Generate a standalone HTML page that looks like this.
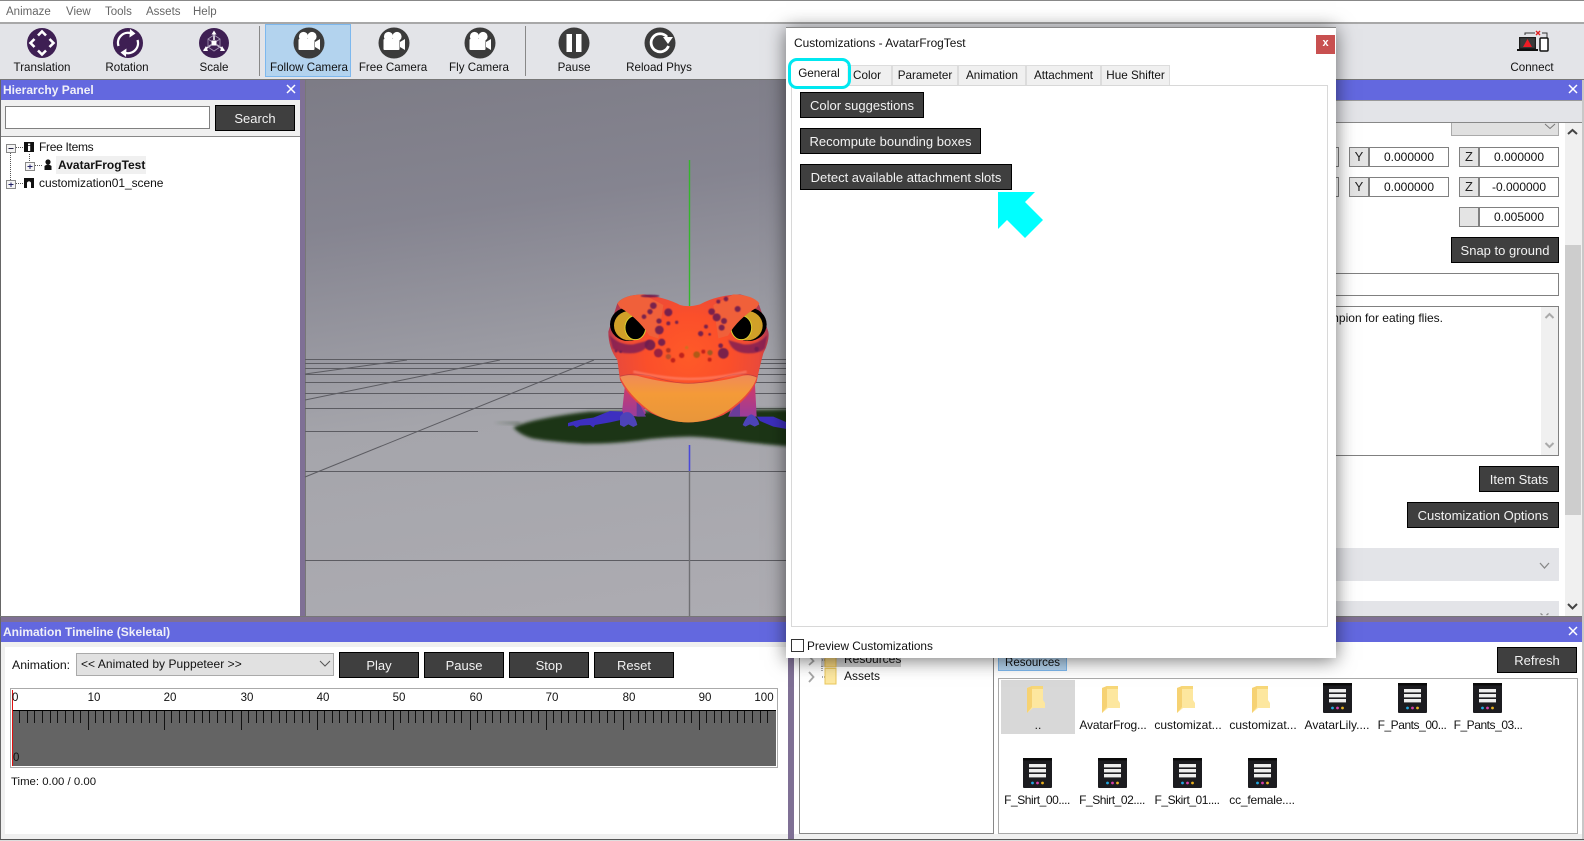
<!DOCTYPE html>
<html><head><meta charset="utf-8"><title>Animaze</title>
<style>
html,body{margin:0;padding:0;width:1584px;height:841px;overflow:hidden;background:#7f7095;font-family:"Liberation Sans",sans-serif;font-size:12px;color:#111}
div,span{box-sizing:border-box}
.a,.t,.b,.tl,.h{position:absolute}
.t{white-space:nowrap;line-height:14px}
.c{transform:translateX(-50%)}
.b{background:#3f3f3f;border:1px solid #000;color:#f2f2f2;font-size:13px;display:flex;align-items:center;justify-content:center;white-space:nowrap}
.tl{transform:translateX(-50%);top:37px;white-space:nowrap;line-height:14px;color:#111;font-size:11.6px}
.h{background:#6368df;height:20px;color:#f0f0f8;font-weight:bold;line-height:20px;padding-left:2px;font-size:12px}
.lab{position:absolute;width:20px;height:20px;background:#e4e4e4;border:1px solid #808080;text-align:center;line-height:18px;font-size:13px;color:#222}
.inp{position:absolute;height:20px;background:#fff;border:1px solid #808080;text-align:center;line-height:18px;color:#111}
.tab{position:absolute;top:65px;height:20px;background:#f0f0f0;border:1px solid #dcdcdc;border-bottom:0;text-align:center;line-height:20px;font-size:11.7px;color:#111}
.fn{position:absolute;transform:translateX(-50%);white-space:nowrap;line-height:14px;font-size:12px}
.fu{letter-spacing:-.45px}
svg{position:absolute;overflow:visible}
</style></head><body>

<!-- top chrome -->
<div class="a" style="left:0;top:0;width:1584px;height:1px;background:#888"></div>
<div class="a" style="left:0;top:1px;width:1584px;height:21px;background:#fff"></div>
<div class="a" style="left:0;top:22px;width:1584px;height:2px;background:#a8a8a8"></div>
<div class="t" style="left:6px;top:5px;color:#666;font-size:11.5px">Animaze</div>
<div class="t" style="left:66px;top:5px;color:#666;font-size:11.5px">View</div>
<div class="t" style="left:105px;top:5px;color:#666;font-size:11.5px">Tools</div>
<div class="t" style="left:146px;top:5px;color:#666;font-size:11.5px">Assets</div>
<div class="t" style="left:193px;top:5px;color:#666;font-size:11.5px">Help</div>

<!-- toolbar -->
<div class="a" style="left:0;top:24px;width:1584px;height:55px;background:#e3e4e8"></div>
<div class="a" style="left:0;top:79px;width:1584px;height:1px;background:#777"></div>
<div class="a" style="left:259px;top:26px;width:1px;height:50px;background:#888"></div>
<div class="a" style="left:525px;top:26px;width:1px;height:50px;background:#888"></div>
<div class="a" style="left:265px;top:24px;width:86px;height:53px;background:#b3d3ee;border:1px solid #7db8ee"></div>
<div id="tb" class="a" style="left:0;top:24px;width:1584px;height:55px">
<div class="tl" style="left:42px">Translation</div>
<div class="tl" style="left:127px">Rotation</div>
<div class="tl" style="left:214px">Scale</div>
<div class="tl" style="left:309px">Follow Camera</div>
<div class="tl" style="left:393px">Free Camera</div>
<div class="tl" style="left:479px">Fly Camera</div>
<div class="tl" style="left:574px">Pause</div>
<div class="tl" style="left:659px">Reload Phys</div>
<div class="tl" style="left:1532px">Connect</div>
</div>
<svg style="left:0;top:0" width="1584" height="80" viewBox="0 0 1584 80">
<defs>
<g id="cam"><circle r="15.5" fill="#3b3b3b"/><circle cx="-5.500" cy="-6.500" r="4.600" fill="#fff"/><circle cx="3" cy="-6.500" r="4.600" fill="#fff"/><rect x="-10.500" y="-4" width="16" height="11" rx="1" fill="#fff"/><path d="M6-1 L11-4 V7 L6 4Z" fill="#fff"/></g>
<g id="fold"><path d="M0 2 L5 0 H16 V14 L18 17 V22 H6 L0 27Z" fill="#fde79f"/><path d="M0 2 L5 0 V21 L0 27Z" fill="#f6d273"/><path d="M5 0 H16 V3 H5Z" fill="#f7d778"/></g>
<g id="doc"><rect width="29" height="30" rx="1" fill="#1c1c20"/><rect width="29" height="2.500" fill="#0a0a0a"/><rect x="6" y="6" width="17" height="3.400" fill="#eee"/><rect x="6" y="11" width="17" height="3.400" fill="#eee"/><rect x="6" y="16" width="17" height="3.400" fill="#eee"/><circle cx="9.500" cy="25" r="1.400" fill="#22a7e0"/><circle cx="14.500" cy="25" r="1.400" fill="#d43fa8"/><circle cx="19.500" cy="25" r="1.400" fill="#e8b020"/></g>
<g id="dec"><path d="M.5 0V19M7.500 0V12M15.500 0V12M22.500 0V12M30.500 0V12M38.500 0V12M45.500 0V12M53.500 0V12M61.500 0V12M68.500 0V12" stroke="#111" stroke-width="1" shape-rendering="crispEdges" fill="none"/></g>
</defs>
<g transform="translate(42,43)"><circle r="15" fill="#3e1f53"/><path d="M-4-7.500 L0-11.500 L4-7.500M-4 7.500 L0 11.500 L4 7.500M-7.500-4 L-11.500 0 L-7.500 4M7.500-4 L11.500 0 L7.500 4" fill="none" stroke="#fff" stroke-width="2.600"/></g>
<g transform="translate(128,43)"><circle r="15" fill="#3e1f53"/><path d="M-9.500 3 A10 10 0 0 1 3-9.700" fill="none" stroke="#fff" stroke-width="2.300"/><path d="M9.500-3 A10 10 0 0 1 -3 9.700" fill="none" stroke="#fff" stroke-width="2.300"/><path d="M2-14 L7.500-9.500 L1.500-5.500Z M-2 14 L-7.500 9.500 L-1.500 5.500Z" fill="#fff"/></g>
<g transform="translate(214,43)"><circle r="15" fill="#3e1f53"/><path d="M0-11 V-3M-10 7 L-3 2M10 7 L3 2" stroke="#fff" stroke-width="1.500"/><path d="M-2.500-8.500 L0-12.500 L2.500-8.500Z" fill="#fff"/><path d="M-6-4 L0-8 L6-4 V4 L0 8 L-6 4Z M-6-4 L6 4M6-4 L-6 4" fill="none" stroke="#a89ab8" stroke-width=".8"/><rect x="-2.500" y="-2.500" width="5" height="5" fill="#fff"/><path d="M-11 8 L-8 3 L-6 8Z M11 8 L8 3 L6 8Z" fill="#fff"/></g>
<use href="#cam" x="309" y="43"/>
<use href="#cam" x="394" y="43"/>
<use href="#cam" x="480" y="43"/>
<g transform="translate(574,43)"><circle r="15.500" fill="#3b3b3b"/><rect x="-7.500" y="-9" width="5.500" height="18" fill="#fff"/><rect x="2" y="-9" width="5.500" height="18" fill="#fff"/></g>
<g transform="translate(660,43)"><circle r="15.500" fill="#3b3b3b"/><path d="M7-6 A9 9 0 1 0 8.500 3" fill="none" stroke="#fff" stroke-width="2.800"/><path d="M3-6 H13 L8 1Z" fill="#fff"/></g>
<g transform="translate(1518,32)"><path d="M7 3 V1 H17M24 1 H29 V6" fill="none" stroke="#333" stroke-width="1"/><path d="M18-1 L22 3M22-1 L18 3" stroke="#e02020" stroke-width="1.400"/><rect x="1" y="5" width="17" height="12" fill="#1c1c1c"/><rect x="2.200" y="6.200" width="14.600" height="9.600" fill="#3a3a3a"/><path d="M9.500 7 L14 15 H5Z" fill="#ee1c25"/><rect x="-1" y="17" width="21" height="2" fill="#111"/><rect x="22" y="6" width="8" height="13" rx="1" fill="#fff" stroke="#111" stroke-width="1.500"/></g>
</svg>

<!-- hierarchy panel -->
<div class="a" style="left:0;top:80px;width:1px;height:760px;background:#666"></div>
<div class="h" style="left:1px;top:80px;width:299px">Hierarchy Panel<svg style="left:285px;top:4px" width="10" height="10" viewBox="0 0 10 10"><path d="M1 1L9 9M9 1L1 9" stroke="#fff" stroke-width="1.500"/></svg></div>
<div class="a" style="left:1px;top:100px;width:299px;height:36px;background:#f0f0f0"></div>
<div class="a" style="left:5px;top:106px;width:205px;height:23px;background:#fff;border:1px solid #808080"></div>
<div class="b" style="left:215px;top:105px;width:80px;height:26px">Search</div>
<div class="a" style="left:1px;top:136px;width:299px;height:480px;background:#fff;border-top:1px solid #888"></div>
<div class="a" style="left:56px;top:156px;width:90px;height:18px;background:#f0f0f0"></div>
<div class="t" style="left:39px;top:140px;letter-spacing:-.3px">Free Items</div>
<div class="t" style="left:58px;top:158px;font-weight:bold">AvatarFrogTest</div>
<div class="t" style="left:39px;top:176px;letter-spacing:-.05px">customization01_scene</div>
<svg style="left:0;top:136px" width="60" height="60" viewBox="0 136 60 60">
<path d="M10.500 153 V180M16 147.500 H24M29.500 154 V162M35 165.500 H43M16 183.500 H24" stroke="#555" stroke-width="1" stroke-dasharray="1 1" fill="none"/>
<rect x="6.500" y="144.500" width="9" height="8" fill="#f4f4f4" stroke="#888"/><path d="M8.500 148.500 H13.500" stroke="#224"/>
<rect x="25.500" y="162.500" width="9" height="8" fill="#f4f4f4" stroke="#888"/><path d="M27.500 166.500 H32.500M30 164.500 V169" stroke="#226"/>
<rect x="6.500" y="180.500" width="9" height="8" fill="#f4f4f4" stroke="#888"/><path d="M8.500 184.500 H13.500M11 182.500 V187" stroke="#226"/>
<rect x="24" y="142" width="10" height="10" fill="#111"/><rect x="28" y="143.500" width="2.200" height="1.800" fill="#fff"/><rect x="28" y="146" width="2.200" height="5" fill="#fff"/>
<circle cx="48" cy="162" r="2.600" fill="#111"/><path d="M44.500 170 V166 Q48 163 51.500 166 V170Z" fill="#111"/>
<rect x="24" y="178" width="10" height="10" fill="#111"/><path d="M27 188 V182.500 Q29 180 31 182.500 V188Z" fill="#fff"/>
</svg>

<!-- viewport -->
<div class="a" style="left:305px;top:80px;width:490px;height:536px;background:linear-gradient(172deg,#7d7c86 0%,#858490 25%,#9a9aa2 48%,#a5a5ab 60%,#adacb2 100%);border-left:1px solid #777"></div>
<svg style="left:305px;top:80px" width="481" height="536" viewBox="305 80 481 536">
<defs>
<clipPath id="vc"><rect x="305" y="80" width="481" height="536"/></clipPath>
<radialGradient id="hg" gradientUnits="userSpaceOnUse" cx="265" cy="215" r="250"><stop offset="0" stop-color="#ff5a28"/><stop offset=".5" stop-color="#fb4f2a"/><stop offset=".85" stop-color="#ea4a3a"/><stop offset="1" stop-color="#b03a50"/></radialGradient>
<linearGradient id="ch" x1="0" y1="0" x2="0" y2="1"><stop offset="0" stop-color="#f08a58"/><stop offset=".4" stop-color="#f49a38"/><stop offset="1" stop-color="#e8963a"/></linearGradient>
<linearGradient id="lg" x1="0" y1="0" x2="0" y2="1"><stop offset="0" stop-color="#d03a68"/><stop offset="1" stop-color="#9a3d9a"/></linearGradient>
<filter id="bl" x="-20%" y="-20%" width="140%" height="140%"><feGaussianBlur stdDeviation="2.500"/></filter>
<filter id="bl2" x="-10%" y="-20%" width="120%" height="140%"><feGaussianBlur stdDeviation="5"/></filter>
<filter id="bl3"><feGaussianBlur stdDeviation="1.500"/></filter>
</defs>
<g stroke="#5c5c62" stroke-width="1" fill="none">
<path d="M305 359.500H786M305 363.500H786M305 368.500H786M305 374.500H786M305 382.500H786M305 393.500H786M305 408.500H786M305 431.500H478M305 471.500H786M305 560.500H786"/>
<path d="M407 360 L305 374M500 360 L305 400M594 360 L305 477"/>
</g>
<path d="M689.500 471V616" stroke="#707074" stroke-width="1.400"/>
<path d="M689.500 160V306" stroke="#35b52d" stroke-width="1.400"/>
<path d="M689.500 445V471" stroke="#4a4ad8" stroke-width="1.600"/>
<g clip-path="url(#vc)">
<!-- leaf -->
<g transform="translate(300,340) scale(.33333)">
<path d="M640 262 Q680 245 720 238 Q800 222 870 215 L1480 208 V320 Q1380 312 1300 302 Q1230 292 1170 290 Q1100 292 1050 297 Q950 312 850 311 Q760 306 700 296 Q660 285 640 262Z" fill="#1a3615" filter="url(#bl2)"/>
<path d="M580 248 L660 245 L660 255Z" fill="#1a3615" opacity=".35" filter="url(#bl2)"/>
</g>
<g transform="translate(600,285) scale(.33333)">
<!-- legs -->
<path d="M75 300 L65 390 L118 395 L138 385 L110 310Z" fill="url(#lg)"/>
<path d="M465 300 L470 395 L420 395 L385 395 L420 310Z" fill="url(#lg)"/>
<path d="M110 340 L138 395 L110 395Z M420 340 L385 395 L420 395Z" fill="#6a3c98"/>
<!-- feet -->
<path d="M-96 414 Q-60 402 -20 398 L30 378 L70 380 L62 405 L30 412 L-15 420 L-20 427 L-30 420 L-60 422 L-70 428 L-80 421 L-96 424Z" fill="#3d2fc0"/>
<path d="M60 395 Q70 378 88 382 Q105 390 112 420 L100 426 L85 418 L72 426 L60 420Z" fill="#4d43b8"/>
<path d="M428 420 Q440 390 455 388 Q472 395 478 418 L464 425 L450 418 L436 425Z" fill="#4d43b8"/>
<path d="M470 395 L520 395 L560 412 V432 L520 425 L480 408Z" fill="#3d2fc0"/>
<!-- head -->
<path d="M52 55 Q70 30 130 28 Q200 38 240 60 Q265 68 300 58 Q350 30 420 28 Q470 40 478 62 L505 140 Q510 165 490 205 Q480 240 470 290 Q440 350 370 390 Q320 412 265 412 Q210 412 155 385 Q90 345 60 285 L52 225 Q25 190 25 140Z" fill="url(#hg)"/>
<!-- under-eye shade -->
<path d="M28 150 Q60 182 100 178 L150 165 Q140 205 90 205 Q55 205 38 190Z M502 150 Q470 182 430 178 L385 165 Q395 205 445 205 Q480 205 495 190Z" fill="#7c1f55" opacity=".8" filter="url(#bl)"/>
<!-- eyes -->
<ellipse cx="84" cy="118" rx="54" ry="50" fill="#000"/>
<ellipse cx="88" cy="122" rx="46" ry="44" fill="#d0a028"/>
<ellipse cx="106" cy="128" rx="31" ry="36" fill="#000" stroke="#dcd030" stroke-width="3"/>
<ellipse cx="446" cy="118" rx="54" ry="50" fill="#000"/>
<ellipse cx="442" cy="122" rx="46" ry="44" fill="#d0a028"/>
<ellipse cx="424" cy="128" rx="31" ry="36" fill="#000" stroke="#dcd030" stroke-width="3"/>
<!-- brows -->
<path d="M52 55 Q70 30 130 28 L190 60 L175 160 L148 152 Q115 100 60 68Z" fill="#f0603a"/>
<path d="M478 55 Q460 30 400 28 L340 60 L355 160 L384 152 Q415 100 470 68Z" fill="#f0603a"/>
<!-- spots -->
<g fill="#6d1f50" opacity=".9" filter="url(#bl3)">
<circle cx="160" cy="62" r="10"/><circle cx="150" cy="80" r="8"/><circle cx="132" cy="95" r="7"/><circle cx="205" cy="82" r="12"/>
<circle cx="177" cy="108" r="8"/><circle cx="178" cy="135" r="13"/><circle cx="150" cy="180" r="16"/><circle cx="185" cy="172" r="11"/><circle cx="205" cy="115" r="6"/><circle cx="230" cy="112" r="5"/>
<circle cx="378" cy="42" r="7"/><circle cx="355" cy="50" r="6"/><circle cx="335" cy="80" r="10"/><circle cx="350" cy="97" r="12"/><circle cx="372" cy="108" r="9"/><circle cx="365" cy="128" r="9"/><circle cx="413" cy="72" r="9"/><circle cx="302" cy="146" r="8"/><circle cx="318" cy="125" r="6"/><circle cx="329" cy="148" r="4"/><circle cx="370" cy="205" r="16"/><circle cx="362" cy="182" r="7"/>
<ellipse cx="150" cy="33" rx="28" ry="4"/><circle cx="62" cy="200" r="4"/><circle cx="48" cy="198" r="4"/><circle cx="470" cy="192" r="7"/>
</g>
<g filter="url(#bl3)"><circle cx="175" cy="204" r="13" fill="#9a2040"/><circle cx="205" cy="196" r="7" fill="#b03020"/><circle cx="245" cy="211" r="8" fill="#c0201c"/><circle cx="205" cy="215" r="8" fill="#b8502a"/><circle cx="219" cy="226" r="7" fill="#c0201c"/><circle cx="290" cy="209" r="10" fill="#b05a18"/><circle cx="310" cy="200" r="6" fill="#c0201c"/><circle cx="330" cy="203" r="8" fill="#a05a20"/><circle cx="329" cy="224" r="6" fill="#c0201c"/><circle cx="260" cy="188" r="5" fill="#d07020"/></g>
<!-- chin -->
<path d="M60 275 Q75 268 110 272 Q190 295 265 295 Q345 295 430 272 Q455 268 470 278 Q455 325 385 375 Q330 412 265 412 Q200 412 150 378 Q85 330 60 275Z" fill="url(#ch)"/>
<path d="M60 274 Q100 262 150 272 Q215 295 265 295 Q320 295 385 272 Q430 260 472 276" fill="none" stroke="#b83c40" stroke-width="2.500" opacity=".7"/>
<path d="M100 260 Q190 280 265 282 Q345 282 440 260" fill="none" stroke="#ff9a88" stroke-width="8" opacity=".45" filter="url(#bl)"/>
</g>
</g>
</svg>

<!-- right panel -->
<div class="a" style="left:1300px;top:80px;width:282px;height:536px;background:#fff"></div>
<div class="h" style="left:1300px;top:80px;width:282px"><svg style="left:268px;top:4px" width="10" height="10" viewBox="0 0 10 10"><path d="M1 1L9 9M9 1L1 9" stroke="#fff" stroke-width="1.500"/></svg></div>
<div class="a" style="left:1300px;top:100px;width:282px;height:23px;background:#e3e4e8;border-top:1px solid #999;border-bottom:1px solid #888"></div>
<div class="a" style="left:1565px;top:123px;width:17px;height:493px;background:#f0f0f0"></div>
<div class="a" style="left:1565px;top:245px;width:16px;height:270px;background:#cdcdcd"></div>
<svg style="left:1300px;top:120px" width="284" height="500" viewBox="1300 120 284 500">
<path d="M1568 134 L1572.500 130 L1577 134M1568 604 L1572.500 608.500 L1577 604" fill="none" stroke="#444" stroke-width="2"/>
</svg>
<div class="a" style="left:1451px;top:123px;width:108px;height:13px;background:#e0e0e0;border:1px solid #aaa;border-top:0"></div>
<svg style="left:1540px;top:123px" width="18" height="8" viewBox="0 0 18 8"><path d="M5 1 L10 5.500 L15 1" fill="none" stroke="#777" stroke-width="1"/></svg>
<div class="inp" style="left:1300px;top:147px;width:39px"></div>
<div class="inp" style="left:1300px;top:177px;width:39px"></div>
<div class="lab" style="left:1349px;top:147px">Y</div><div class="inp" style="left:1369px;top:147px;width:80px">0.000000</div>
<div class="lab" style="left:1459px;top:147px">Z</div><div class="inp" style="left:1479px;top:147px;width:80px">0.000000</div>
<div class="lab" style="left:1349px;top:177px">Y</div><div class="inp" style="left:1369px;top:177px;width:80px">0.000000</div>
<div class="lab" style="left:1459px;top:177px">Z</div><div class="inp" style="left:1479px;top:177px;width:80px">-0.000000</div>
<div class="lab" style="left:1459px;top:207px"></div><div class="inp" style="left:1479px;top:207px;width:80px">0.005000</div>
<div class="b" style="left:1451px;top:237px;width:108px;height:26px">Snap to ground</div>
<div class="a" style="left:1300px;top:273px;width:259px;height:23px;background:#fff;border:1px solid #808080"></div>
<div class="a" style="left:1300px;top:306px;width:259px;height:150px;background:#fff;border:1px solid #808080"></div>
<div class="a" style="left:1541px;top:307px;width:17px;height:148px;background:#f0f0f0"></div>
<svg style="left:1541px;top:307px" width="17" height="148" viewBox="0 0 17 148"><path d="M4.500 11 L8.500 7 L12.500 11M4.500 136 L8.500 140 L12.500 136" fill="none" stroke="#aaa" stroke-width="2"/></svg>
<div class="t" style="right:141px;top:311px">a champion for eating flies.</div>
<div class="b" style="left:1479px;top:466px;width:80px;height:26px">Item Stats</div>
<div class="b" style="left:1407px;top:502px;width:152px;height:26px">Customization Options</div>
<div class="a" style="left:1300px;top:548px;width:259px;height:33px;background:#e3e4e8"></div>
<div class="a" style="left:1300px;top:601px;width:259px;height:15px;background:#e3e4e8"></div>
<svg style="left:1530px;top:555px" width="30" height="60" viewBox="0 0 30 60"><path d="M10 8 L14.500 13 L19 8M10.500 58.500 L12.500 60M18.500 58.500 L16.500 60" fill="none" stroke="#888" stroke-width="1.300"/></svg>
<div class="a" style="left:1300px;top:616px;width:284px;height:1px;background:#777"></div>
<div class="a" style="left:1582px;top:80px;width:2px;height:761px;background:#c8c8c8"></div>

<!-- timeline -->
<div class="a" style="left:0;top:616px;width:800px;height:1px;background:#777"></div>
<div class="h" style="left:1px;top:622px;width:787px">Animation Timeline (Skeletal)</div>
<div class="a" style="left:1px;top:642px;width:787px;height:197px;background:#f0f0f0"></div>
<div class="a" style="left:5px;top:647px;width:783px;height:187px;background:#fff"></div>
<div class="t" style="left:12px;top:658px;font-size:12.300px">Animation:</div>
<div class="a" style="left:76px;top:653px;width:258px;height:23px;background:#e1e1e1;border:1px solid #aaa;line-height:21px;padding-left:4px;white-space:nowrap;letter-spacing:.05px">&lt;&lt; Animated by Puppeteer &gt;&gt;</div>
<svg style="left:318px;top:660px" width="14" height="8" viewBox="0 0 14 8"><path d="M2 1 L7 6 L12 1" fill="none" stroke="#555" stroke-width="1"/></svg>
<div class="b" style="left:339px;top:652px;width:80px;height:26px">Play</div>
<div class="b" style="left:424px;top:652px;width:80px;height:26px">Pause</div>
<div class="b" style="left:509px;top:652px;width:80px;height:26px">Stop</div>
<div class="b" style="left:594px;top:652px;width:80px;height:26px">Reset</div>
<div class="a" style="left:10px;top:688px;width:768px;height:80px;background:#fff;border:1px solid #aaa"></div>
<div class="a" style="left:12px;top:710px;width:764px;height:56px;background:#646464;border-top:1px solid #000"></div>
<svg style="left:0;top:0" width="1" height="1" viewBox="0 0 1 1">
<use href="#dec" x="12" y="711"/><use href="#dec" x="88" y="711"/><use href="#dec" x="164" y="711"/><use href="#dec" x="241" y="711"/><use href="#dec" x="317" y="711"/><use href="#dec" x="393" y="711"/><use href="#dec" x="470" y="711"/><use href="#dec" x="546" y="711"/><use href="#dec" x="623" y="711"/><use href="#dec" x="699" y="711"/>
</svg>
<div class="a" style="left:12px;top:690px;width:1px;height:76px;background:#e01010"></div>
<div class="t" style="left:12px;top:691px;font-size:11.500px">0</div>
<div class="t c" style="left:94px;top:691px;font-size:11.500px">10</div>
<div class="t c" style="left:170px;top:691px;font-size:11.500px">20</div>
<div class="t c" style="left:247px;top:691px;font-size:11.500px">30</div>
<div class="t c" style="left:323px;top:691px;font-size:11.500px">40</div>
<div class="t c" style="left:399px;top:691px;font-size:11.500px">50</div>
<div class="t c" style="left:476px;top:691px;font-size:11.500px">60</div>
<div class="t c" style="left:552px;top:691px;font-size:11.500px">70</div>
<div class="t c" style="left:629px;top:691px;font-size:11.500px">80</div>
<div class="t c" style="left:705px;top:691px;font-size:11.500px">90</div>
<div class="t c" style="left:764px;top:691px;font-size:11.500px">100</div>
<div class="t" style="left:13px;top:751px;font-size:11.500px">0</div>
<div class="t" style="left:11px;top:775px;font-size:11.400px">Time: 0.00 / 0.00</div>

<!-- file panel -->
<div class="h" style="left:794px;top:622px;width:788px"><svg style="left:774px;top:4px" width="10" height="10" viewBox="0 0 10 10"><path d="M1 1L9 9M9 1L1 9" stroke="#fff" stroke-width="1.500"/></svg></div>
<div class="a" style="left:794px;top:642px;width:788px;height:197px;background:#fff"></div>
<div class="a" style="left:794px;top:834px;width:788px;height:5px;background:#f0f0f0"></div>
<div class="a" style="left:799px;top:640px;width:195px;height:194px;background:#fff;border:1px solid #888"></div>
<div class="a" style="left:821px;top:650px;width:80px;height:17px;background:#ccc"></div>
<div class="t" style="left:844px;top:652px">Resources</div>
<div class="t" style="left:844px;top:669px">Assets</div>
<svg style="left:800px;top:650px" width="60" height="40" viewBox="800 650 60 40">
<path d="M809 656 L813.500 661 L809 665M809 672 L813.500 677 L809 682" fill="none" stroke="#a6a6a6" stroke-width="1.800"/>
<path d="M822 660H825M822 677H825M822 666V672" stroke="#555" stroke-width="1" stroke-dasharray="1 1"/>
<path d="M825 652 H836 V667 H825Z" fill="#f2d27c" stroke="#e2b94c"/>
<path d="M825 668.500 H836 V684 H825Z" fill="#fde8a0" stroke="#e9c65c"/>
</svg>
<div class="a" style="left:998px;top:655px;width:69px;height:16px;background:#b3d3ee;border:1px solid #7db8ee;text-align:center;line-height:15px;font-size:11.500px">Resources</div>
<div class="b" style="left:1497px;top:647px;width:80px;height:26px">Refresh</div>
<div class="a" style="left:998px;top:678px;width:580px;height:156px;background:#fff;border:1px solid #aaa"></div>
<div class="a" style="left:1001px;top:680px;width:74px;height:54px;background:#d8d8d8"></div>
<svg style="left:998px;top:678px" width="580" height="156" viewBox="998 678 580 156">
<use href="#fold" x="1027" y="686"/><use href="#fold" x="1102" y="686"/><use href="#fold" x="1177" y="686"/><use href="#fold" x="1252" y="686"/>
<use href="#doc" x="1323" y="683"/><use href="#doc" x="1398" y="683"/><use href="#doc" x="1473" y="683"/>
<use href="#doc" x="1023" y="758"/><use href="#doc" x="1098" y="758"/><use href="#doc" x="1173" y="758"/><use href="#doc" x="1248" y="758"/>
</svg>
<div class="fn" style="left:1038px;top:718px">..</div>
<div class="fn" style="left:1113px;top:718px;letter-spacing:-.15px">AvatarFrog...</div>
<div class="fn" style="left:1188px;top:718px">customizat...</div>
<div class="fn" style="left:1263px;top:718px">customizat...</div>
<div class="fn" style="left:1337px;top:718px">AvatarLily....</div>
<div class="fn fu" style="left:1412px;top:718px">F_Pants_00...</div>
<div class="fn fu" style="left:1488px;top:718px">F_Pants_03...</div>
<div class="fn fu" style="left:1037px;top:793px">F_Shirt_00....</div>
<div class="fn fu" style="left:1112px;top:793px">F_Shirt_02....</div>
<div class="fn fu" style="left:1187px;top:793px">F_Skirt_01....</div>
<div class="fn" style="left:1262px;top:793px;letter-spacing:-.2px">cc_female....</div>

<div class="a" style="left:0;top:839px;width:1584px;height:1px;background:#555"></div>
<div class="a" style="left:0;top:840px;width:1584px;height:1px;background:#ddd"></div>

<!-- dialog -->
<div class="a" style="left:786px;top:27px;width:550px;height:631px;background:#fff;box-shadow:0 2px 18px rgba(0,0,0,.55);border-top:1px solid #888">
<div class="t" style="left:8px;top:8px;font-size:11.900px">Customizations - AvatarFrogTest</div>
<div class="a" style="left:530px;top:7px;width:19px;height:19px;background:#c85050;color:#fff;text-align:center;line-height:17px;font-weight:bold;font-size:11px">x</div>
</div>
<div class="a" style="left:791px;top:85px;width:537px;height:542px;background:#fff;border:1px solid #d8d8d8"></div>
<div class="tab" style="left:840px;width:52px;padding-left:2px">Color</div>
<div class="tab" style="left:892px;width:66px">Parameter</div>
<div class="tab" style="left:958px;width:68px">Animation</div>
<div class="tab" style="left:1026px;width:75px">Attachment</div>
<div class="tab" style="left:1101px;width:69px">Hue Shifter</div>
<div class="a" style="left:792px;top:63px;width:55px;height:24px;background:#fff"></div>
<div class="t c" style="left:819px;top:67px;font-size:11.700px">General</div>
<div class="a" style="left:788px;top:58px;width:63px;height:31px;border:3px solid #00e8f0;border-radius:9px"></div>
<div class="b" style="left:800px;top:92px;width:124px;height:26px">Color suggestions</div>
<div class="b" style="left:800px;top:128px;width:181px;height:26px">Recompute bounding boxes</div>
<div class="b" style="left:800px;top:164px;width:212px;height:26px">Detect available attachment slots</div>
<svg style="left:990px;top:185px" width="60" height="60" viewBox="990 185 60 60"><path d="M998 192 H1035 L1025 202 L1043 220 L1025 238 L1007 220 L998 229Z" fill="#00ffff"/></svg>
<div class="a" style="left:791px;top:639px;width:13px;height:13px;background:#fff;border:1px solid #333"></div>
<div class="t" style="left:807px;top:639px;font-size:11.800px">Preview Customizations</div>

</body></html>
